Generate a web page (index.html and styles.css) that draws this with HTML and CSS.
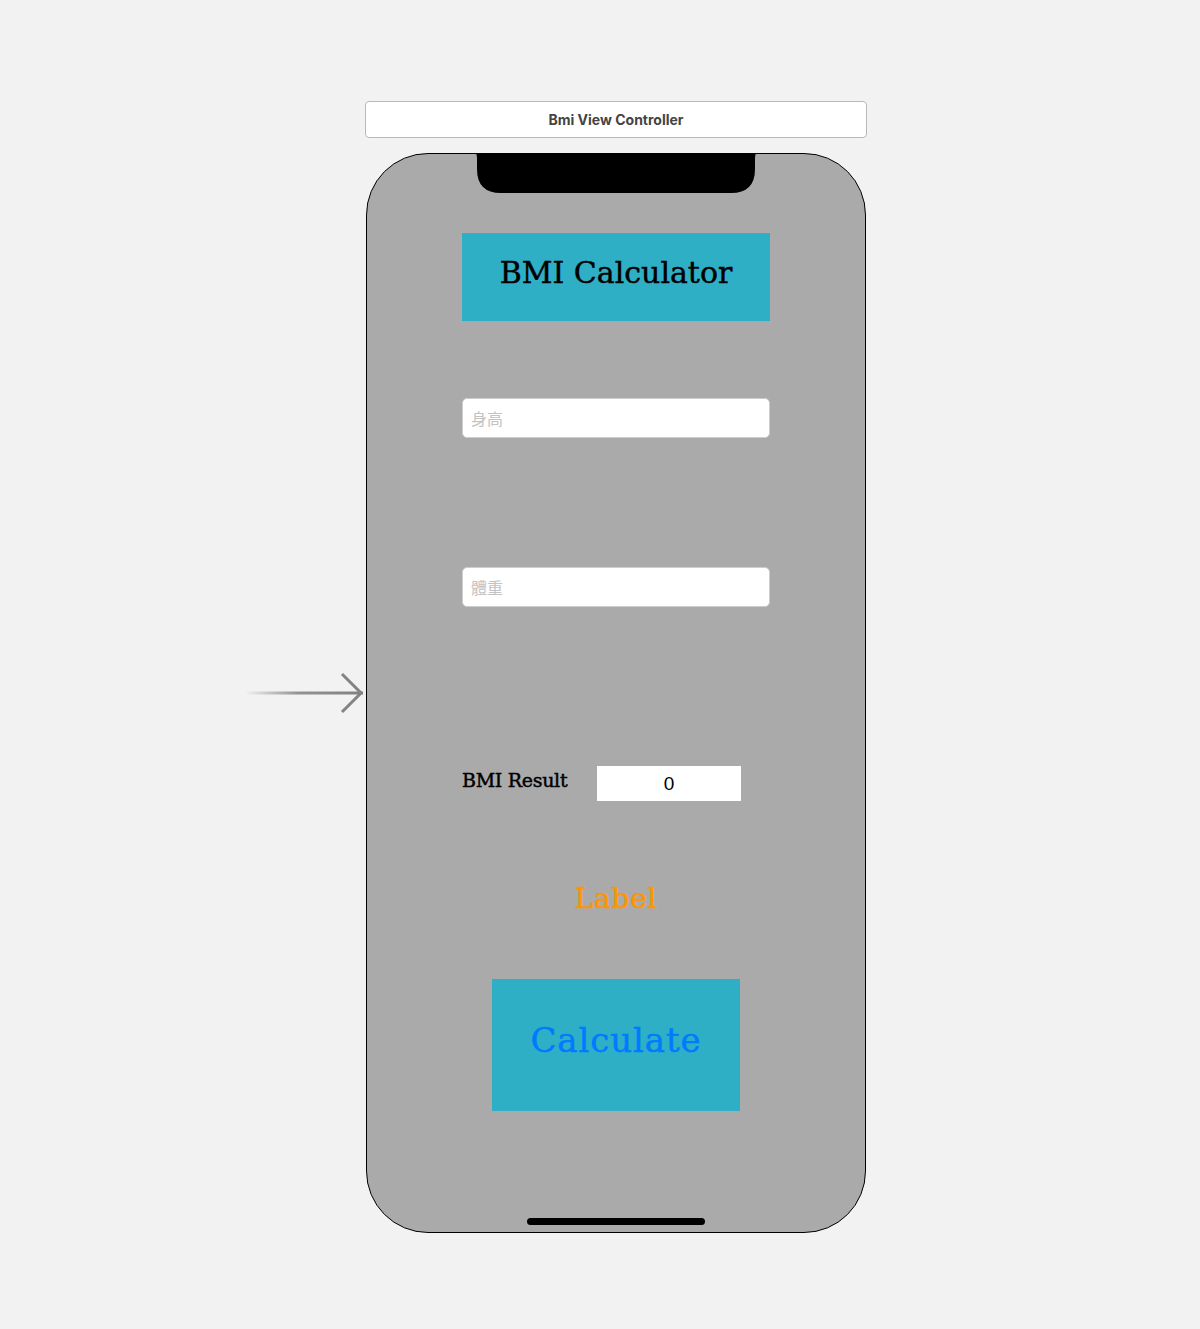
FILE: index.html
```html
<!DOCTYPE html>
<html lang="zh-Hant">
<head>
  <meta charset="UTF-8" />
  <title>Bmi View Controller</title>
  <link rel="stylesheet" href="styles.css">
</head>
<body>

  <div class="scene">
    <div class="scene-title">Bmi View Controller</div>

    <div class="phone">
      <!-- entry point arrow -->
      <svg class="entry-arrow" width="122" height="42" viewBox="0 0 122 42">
        <defs>
          <linearGradient id="arrowFade" x1="0" x2="1" y1="0" y2="0">
            <stop offset="0" stop-color="#888" stop-opacity="0" />
            <stop offset="0.45" stop-color="#888" stop-opacity="0.9" />
            <stop offset="1" stop-color="#808080" />
          </linearGradient>
        </defs>
        <rect x="0" y="19.5" width="118" height="3" fill="url(#arrowFade)" />
        <path d="M97 2 L116 21 L97 40" fill="none" stroke="#838383" stroke-width="3" />
      </svg>

      <svg class="notch" width="282" height="41" viewBox="0 0 282 41">
        <path d="M0 0 Q2 0 2 6 V16 Q2 40 26 40 H256 Q280 40 280 16 V6 Q280 0 282 0 Z" fill="#000" />
      </svg>

      <div class="screen">
        <div class="title-box">BMI Calculator</div>

        <div class="field field-height">身高</div>
        <div class="field field-weight">體重</div>

        <div class="result-row">
          <span class="result-label">BMI Result</span>
          <span class="result-value">0</span>
        </div>

        <div class="status-label">Label</div>

        <div class="calc-button">Calculate</div>
      </div>

      <div class="home-indicator"></div>
    </div>
  </div>

</body>
</html>
```

FILE: styles.css
```css
html, body {
  margin: 0;
  padding: 0;
  background: #f2f2f2;
  font-family: "DejaVu Serif", serif;
}

.scene {
  width: 502px;
  margin: 101px 0 0 365px;
}

/* Scene header bar */
.scene-title {
  height: 37px;
  box-sizing: border-box;
  background: #fff;
  border: 1px solid #b8b8b8;
  border-radius: 4px;
  display: flex;
  align-items: center;
  justify-content: center;
  font-family: Inter, "Noto Sans", sans-serif;
  font-weight: 700;
  font-size: 14px;
  color: #444;
}

/* Device frame */
.phone {
  position: relative;
  width: 500px;
  height: 1080px;
  margin: 15px 0 0 1px;
  box-sizing: border-box;
  background: #aaaaaa;
  border: 1px solid #000;
  border-radius: 62px;
}

.entry-arrow {
  position: absolute;
  left: -122px;
  top: 518px;
}

.notch {
  position: absolute;
  top: -1px;
  left: 108px;
}

.screen {
  width: 308px;
  margin: 0 auto;
  padding-top: 79px;
  display: flex;
  flex-direction: column;
  align-items: center;
  -webkit-text-stroke: 0.45px currentColor;
}

.title-box {
  width: 100%;
  height: 88px;
  background: #2eafc6;
  display: flex;
  align-items: center;
  justify-content: center;
  font-size: 30px;
  letter-spacing: 0;
  color: #000;
  padding-bottom: 9px;
  box-sizing: border-box;
}

.field {
  width: 100%;
  height: 40px;
  box-sizing: border-box;
  background: #fff;
  border: 1px solid #cdcdcd;
  border-radius: 5px;
  padding-left: 8px;
  display: flex;
  align-items: center;
  font-family: "Noto Sans CJK TC", sans-serif;
  font-size: 16px;
  color: #c3c3c3;
  -webkit-text-stroke: 0;
}

.field-height {
  margin-top: 77px;
}

.field-weight {
  margin-top: 129px;
}

.result-row {
  width: 100%;
  height: 35px;
  margin-top: 159px;
  display: flex;
  align-items: center;
}

.result-label {
  width: 135px;
  font-size: 19px;
  letter-spacing: -0.3px;
  color: #000;
  margin-top: -7px;
}

.result-value {
  width: 144px;
  height: 35px;
  background: #fff;
  display: flex;
  align-items: center;
  justify-content: center;
  font-family: "Liberation Sans", sans-serif;
  font-size: 19px;
  color: #000;
  -webkit-text-stroke: 0;
}

.status-label {
  margin-top: 80px;
  height: 36px;
  line-height: 36px;
  font-size: 28px;
  letter-spacing: 0.8px;
  color: #ff9500;
}

.calc-button {
  width: 248px;
  height: 132px;
  margin-top: 62px;
  background: #2eafc6;
  display: flex;
  align-items: center;
  justify-content: center;
  padding-bottom: 10px;
  box-sizing: border-box;
  font-size: 34px;
  letter-spacing: 0.9px;
  color: #007aff;
}

.home-indicator {
  position: absolute;
  left: 160px;
  bottom: 7px;
  width: 178px;
  height: 7px;
  border-radius: 4px;
  background: #000;
}
```
